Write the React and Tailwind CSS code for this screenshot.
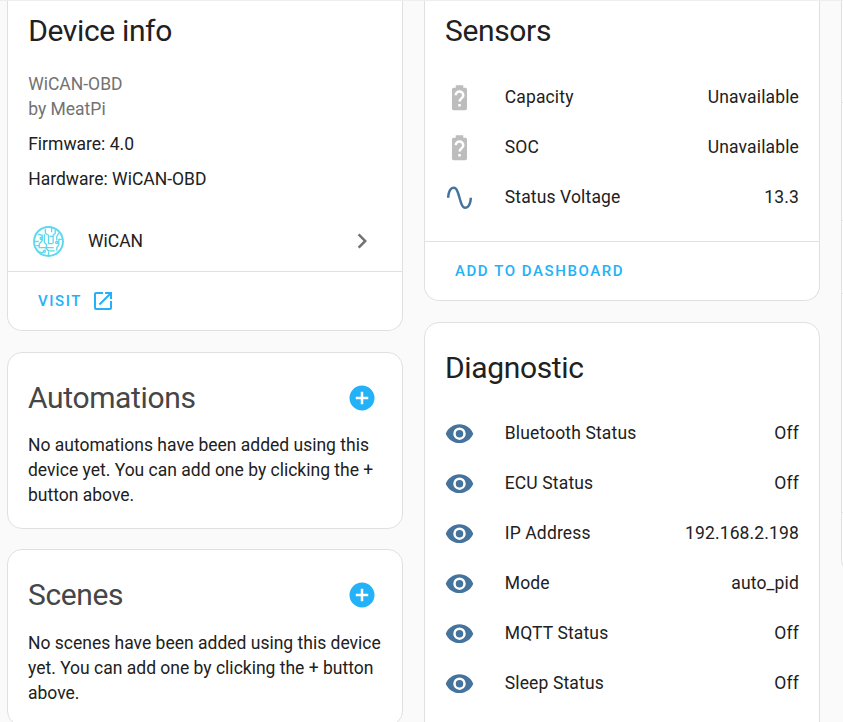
const PATHS = {
  battery:
    'M15.07,12.25L14.17,13.17C13.63,13.71 13.25,14.18 13.09,15H11.05C11.16,14.1 11.56,13.28 12.17,12.67L13.41,11.41C13.78,11.05 14,10.55 14,10C14,8.89 13.1,8 12,8A2,2 0 0,0 10,10H8A4,4 0 0,1 12,6A4,4 0 0,1 16,10C16,10.88 15.64,11.68 15.07,12.25M13,19H11V17H13M16.67,4H15V2H9V4H7.33A1.33,1.33 0 0,0 6,5.33V20.67C6,21.4 6.6,22 7.33,22H16.67A1.33,1.33 0 0,0 18,20.67V5.33C18,4.6 17.4,4 16.67,4Z',
  eye: 'M12,9A3,3 0 0,0 9,12A3,3 0 0,0 12,15A3,3 0 0,0 15,12A3,3 0 0,0 12,9M12,17A5,5 0 0,1 7,12A5,5 0 0,1 12,7A5,5 0 0,1 17,12A5,5 0 0,1 12,17M12,4.5C7,4.5 2.73,7.61 1,12C2.73,16.39 7,19.5 12,19.5C17,19.5 21.27,16.39 23,12C21.27,7.61 17,4.5 12,4.5Z',
  sine: 'M16.5,21C13.5,21 12.31,16.76 11.05,12.28C10.14,9.04 9,5 7.5,5C4.11,5 4,11.93 4,12H2C2,11.63 2.06,3 7.5,3C10.5,3 11.71,7.25 12.97,11.74C13.83,14.8 15,19 16.5,19C19.94,19 20.03,12.07 20.03,12H22.03C22.03,12.37 21.97,21 16.5,21Z',
  open: 'M14,3V5H17.59L7.76,14.83L9.17,16.24L19,6.41V10H21V3M19,19H5V5H12V3H5C3.89,3 3,3.9 3,5V19A2,2 0 0,0 5,21H19A2,2 0 0,0 21,19V12H19V19Z',
  plus: 'M17,13H13V17H11V13H7V11H11V7H13V11H17M12,2A10,10 0 0,0 2,12A10,10 0 0,0 12,22A10,10 0 0,0 22,12A10,10 0 0,0 12,2Z',
  chevron: 'M8.59,16.58L13.17,12L8.59,7.41L10,6L16,12L10,18L8.59,16.58Z',
};

function Icon({ name, className }) {
  return (
    <svg viewBox="0 0 24 24" fill="currentColor" className={`shrink-0 ${className}`}>
      <path d={PATHS[name]} />
    </svg>
  );
}

function Logo() {
  return (
    <svg viewBox="0 0 30 30" fill="none" stroke="#5fd8ec" strokeWidth="1.3" className="size-[31px] shrink-0">
      <circle cx="15" cy="15" r="14" strokeWidth="1.9" />
      <path d="M5 8l4 1v5l-3 3.500v4M2 15h3.500M11 8v8l2 2v3h7M12 3v4l3 2v8h4M18 2v4M21.500 3.500v3.500l-2 2v8M16 10h3M25 7l-2 3v4M28 13h-3v5l-2 3v3M6 21h6l3 3h6M6 25l4 1M15 25v4M3 19h3" />
      <circle cx="8" cy="12" r="1.100" />
      <circle cx="23" cy="16" r="1.100" />
      <circle cx="11" cy="24.500" r="1.100" />
    </svg>
  );
}

function Card({ className, children }) {
  return (
    <section className={`flex shrink-0 flex-col border border-[#e0e0e0] bg-white ${className}`}>{children}</section>
  );
}

function Title({ children, className }) {
  return <h1 className={`text-[30px] leading-[60px] font-normal tracking-[-0.36px] ${className}`}>{children}</h1>;
}

function Row({ icon, color, label, value }) {
  return (
    <div className="flex h-[50px] items-center tracking-[0.14px]">
      <Icon name={icon} className={`-ml-px size-[30px] translate-x-[0.5px] translate-y-[0.7px] ${color}`} />
      <span className="ml-[30.75px] flex-1">{label}</span>
      <span>{value}</span>
    </div>
  );
}

function EmptyCard({ title, children, className }) {
  return (
    <Card className={`rounded-[15px] px-5 pt-[15px] ${className}`}>
      <div className="flex items-center justify-between pr-[5px]">
        <Title className="text-[#464646]">{title}</Title>
        <Icon name="plus" className="size-[30px] text-[#23b1f7]" />
      </div>
      {children}
    </Card>
  );
}

const DIAGNOSTICS = [
  ['Bluetooth Status', 'Off'],
  ['ECU Status', 'Off'],
  ['IP Address', '192.168.2.198'],
  ['Mode', 'auto_pid'],
  ['MQTT Status', 'Off'],
  ['Sleep Status', 'Off'],
];

export default function App() {
  return (
    <div className="h-[722px] w-[843px] overflow-hidden border-t border-[#eeeeee] bg-[#fafafa] font-[Roboto,sans-serif] text-[17.5px] leading-[25px] text-[#212121]">
      <div className="flex h-full gap-[21px] pl-[7px]">
        <div className="flex w-[396px] shrink-0 flex-col gap-[21px]">
          <Card className="h-[330px] rounded-b-[15px] border-t-0">
            <div className="px-5 pl-[20.2px]">
              <Title>Device info</Title>
              <div className="mt-[11px] text-[#727272]">
                <div>WiCAN-OBD</div>
                <div>by MeatPi</div>
              </div>
              <div className="mt-[10px]">Firmware: 4.0</div>
              <div className="mt-[10px]">Hardware: WiCAN-OBD</div>
            </div>
            <div className="mt-[19px] flex h-[60px] items-center pr-[25px] pl-[25px]">
              <Logo />
              <span className="ml-6 flex-1">WiCAN</span>
              <Icon name="chevron" className="size-[30px] text-[#727272]" />
            </div>
            <div className="flex flex-1 items-center border-t border-[#e0e0e0] pl-[30px] text-[#23b1f7]">
              <span className="text-[15px] font-medium tracking-[1.56px]">VISIT</span>
              <Icon name="open" className="ml-[9px] size-6" />
            </div>
          </Card>
          <EmptyCard title="Automations" className="h-[177px]">
            <p className="mt-[5px] -mr-2">
              No automations have been added using this
              <br />
              device yet. You can add one by clicking the +
              <br />
              button above.
            </p>
          </EmptyCard>
          <EmptyCard title="Scenes" className="-mt-px h-[177px]">
            <p className="mt-1.5 -mr-2">
              No scenes have been added using this device
              <br />
              yet. You can add one by clicking the + button
              <br />
              above.
            </p>
          </EmptyCard>
        </div>
        <div className="flex w-[396px] shrink-0 flex-col gap-[21px]">
          <Card className="h-[300px] rounded-b-[15px] border-t-0">
            <div className="px-5">
              <Title>Sensors</Title>
              <div className="mt-[11px]">
                <Row icon="battery" color="text-[#bdbdbd]" label="Capacity" value="Unavailable" />
                <Row icon="battery" color="text-[#bdbdbd]" label="SOC" value="Unavailable" />
                <Row icon="sine" color="text-[#44739e]" label="Status Voltage" value="13.3" />
              </div>
            </div>
            <div className="mt-[19px] flex flex-1 items-center border-t border-[#e0e0e0] pl-[30px] text-[#23b1f7]">
              <span className="text-[15px] font-medium tracking-[1.56px]">ADD TO DASHBOARD</span>
            </div>
          </Card>
          <Card className="h-[440px] rounded-[15px] px-5 pt-[15px]">
            <Title>Diagnostic</Title>
            <div className="mt-[10px]">
              {DIAGNOSTICS.map(([label, value]) => (
                <Row key={label} icon="eye" color="text-[#44739e]" label={label} value={value} />
              ))}
            </div>
          </Card>
        </div>
        <Card className="h-[573px] w-[396px] rounded-b-[15px] border-t-0">
          <div className="h-[102px] border-b border-[#e8e8e8]" />
          <div className="h-[118px] border-b border-[#e8e8e8]" />
          <div className="h-[73px] border-b border-[#e8e8e8]" />
          <div className="h-[219px] border-b border-[#e8e8e8]" />
        </Card>
      </div>
    </div>
  );
}
